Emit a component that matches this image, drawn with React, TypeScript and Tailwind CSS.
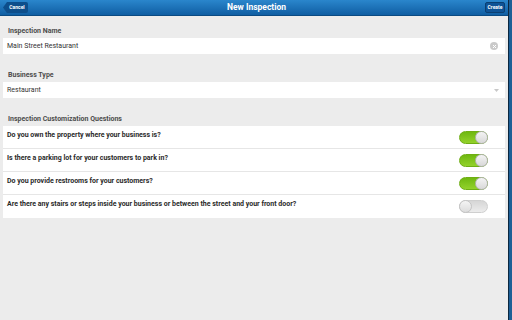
import React from "react";

const questions = [
  { text: "Do you own the property where your business is?", on: true },
  { text: "Is there a parking lot for your customers to park in?", on: true },
  { text: "Do you provide restrooms for your customers?", on: true },
  {
    text: "Are there any stairs or steps inside your business or between the street and your front door?",
    on: false,
  },
];

function Toggle({ on }: { on: boolean }) {
  return (
    <div
      className={
        on
          ? "relative h-[13px] w-[29px] rounded-full border border-[#6fae14] bg-gradient-to-b from-[#6fb80f] to-[#93d22a]"
          : "relative h-[13px] w-[29px] rounded-full border border-[#cfcfcf] bg-gradient-to-b from-[#d6d6d6] to-[#ececec]"
      }
    >
      <div
        className={
          on
            ? "absolute right-[-1px] top-[-1px] h-[13px] w-[13px] rounded-full border border-[#b5b5b5] bg-gradient-to-b from-[#f4f4f4] to-[#d8d8d8]"
            : "absolute left-[-1px] top-[-1px] h-[13px] w-[13px] rounded-full border border-[#c4c4c4] bg-gradient-to-b from-[#f4f4f4] to-[#dcdcdc]"
        }
      />
    </div>
  );
}

function Label({ children, first }: { children: React.ReactNode; first?: boolean }) {
  return (
    <div
      className={
        first
          ? "flex h-[22px] items-center pl-[5px] pt-[8px] text-[7px] font-bold text-[#4d4d4d]"
          : "flex h-[28px] items-center pl-[5px] pt-[14px] text-[7px] font-bold text-[#4d4d4d]"
      }
    >
      {children}
    </div>
  );
}

export default function App() {
  return (
    <div className="flex h-[320px] w-[512px] font-['Roboto',sans-serif]">
      <div className="flex flex-1 flex-col bg-[#ececec]">
        <header className="flex h-[16px] items-center justify-between border-b border-[#0a4a82] bg-gradient-to-b from-[#2a86cc] to-[#0f5ea3] px-[3px]">
          <button className="flex h-[11px] w-[25px] items-center justify-center rounded-r-[2px] bg-[#0d4e8b] pl-[3px] text-[5px] font-bold text-white [clip-path:polygon(4px_0,100%_0,100%_100%,4px_100%,0_50%)]">
            Cancel
          </button>
          <div className="text-[8.5px] font-bold text-white">New Inspection</div>
          <button className="flex h-[11px] w-[20px] items-center justify-center rounded-[2px] border border-[#0a3f72] bg-[#0e5396] text-[5px] font-bold text-white">
            Create
          </button>
        </header>

        <div className="flex flex-col px-[3px]">
          <Label first>Inspection Name</Label>
          <div className="flex h-[16px] items-center justify-between bg-white pl-[4px] pr-[7px] text-[7px] text-[#333]">
            <span>Main Street Restaurant</span>
            <span className="flex h-[8px] w-[8px] items-center justify-center rounded-full bg-[#cacaca]">
              <svg width="5" height="5" viewBox="0 0 5 5">
                <path d="M1 1L4 4M4 1L1 4" stroke="#fff" strokeWidth="1" />
              </svg>
            </span>
          </div>

          <Label>Business Type</Label>
          <div className="flex h-[16px] items-center justify-between bg-white pl-[4px] pr-[6px] text-[7px] text-[#333]">
            <span>Restaurant</span>
            <svg width="5" height="3" viewBox="0 0 5 3">
              <path d="M0 0H5L2.5 3Z" fill="#c8c8c8" />
            </svg>
          </div>

          <Label>Inspection Customization Questions</Label>
          <div className="flex flex-col bg-white">
            {questions.map((q, i) => (
              <div
                key={i}
                className={
                  "flex h-[23px] items-center justify-between pl-[4px] pr-[17px] " +
                  (i < questions.length - 1 ? "border-b border-[#e6e6e6]" : "")
                }
              >
                <span className="self-start pt-[4px] text-[7px] font-bold text-[#2a2a2a]">{q.text}</span>
                <Toggle on={q.on} />
              </div>
            ))}
          </div>
        </div>
      </div>
      <div className="w-[4px] border-l border-[#0b2740] bg-[#1e5f96]" />
    </div>
  );
}
